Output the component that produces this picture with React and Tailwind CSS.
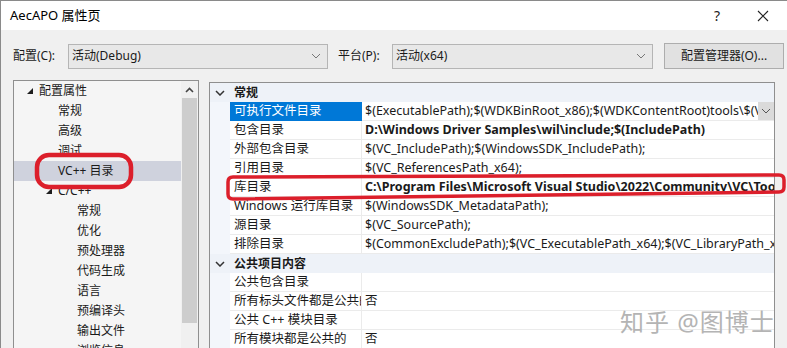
import React from "react";

const FONT = { fontFamily: '"Noto Sans", "Noto Sans CJK SC", sans-serif' };

function Chevron({ className = "", color = "#606060", w = 1.2 }) {
  return (
    <svg width="10" height="6" viewBox="0 0 10 6" className={className}>
      <polyline points="1,1 5,5 9,1" fill="none" stroke={color} strokeWidth={w} />
    </svg>
  );
}

function Tri() {
  return (
    <svg width="6" height="6" viewBox="0 0 6 6" className="shrink-0">
      <polygon points="6,0 6,6 0,6" fill="#1e1e1e" />
    </svg>
  );
}

const treeRows = [
  { t: "配置属性", pad: 27, tri: true },
  { t: "常规", pad: 58 },
  { t: "高级", pad: 58 },
  { t: "调试", pad: 58 },
  { t: "VC++ 目录", pad: 58, sel: true },
  { t: "C/C++", pad: 46, tri: true },
  { t: "常规", pad: 77 },
  { t: "优化", pad: 77 },
  { t: "预处理器", pad: 77 },
  { t: "代码生成", pad: 77 },
  { t: "语言", pad: 77 },
  { t: "预编译头", pad: 77 },
  { t: "输出文件", pad: 77 },
  { t: "浏览信息", pad: 77 },
];

const gridRows = [
  { cat: "常规" },
  { n: "可执行文件目录", v: "$(ExecutablePath);$(WDKBinRoot_x86);$(WDKContentRoot)tools\\$(VC_ExecutablePath_x64)", sel: true },
  { n: "包含目录", v: "D:\\Windows Driver Samples\\wil\\include;$(IncludePath)", b: true },
  { n: "外部包含目录", v: "$(VC_IncludePath);$(WindowsSDK_IncludePath);" },
  { n: "引用目录", v: "$(VC_ReferencesPath_x64);" },
  { n: "库目录", v: "C:\\Program Files\\Microsoft Visual Studio\\2022\\Community\\VC\\Tools", b: true },
  { n: "Windows 运行库目录", v: "$(WindowsSDK_MetadataPath);" },
  { n: "源目录", v: "$(VC_SourcePath);" },
  { n: "排除目录", v: "$(CommonExcludePath);$(VC_ExecutablePath_x64);$(VC_LibraryPath_x64);" },
  { cat: "公共项目内容" },
  { n: "公共包含目录", v: "" },
  { n: "所有标头文件都是公共的", v: "否" },
  { n: "公共 C++ 模块目录", v: "" },
  { n: "所有模块都是公共的", v: "否" },
];

export default function App() {
  return (
    <div
      className="relative w-[787px] h-[348px] overflow-hidden bg-[#f0f0f0] text-[12px] text-[#1a1a1a] border-l border-t border-[#8a8a8a]"
      style={FONT}
    >
      {/* title bar */}
      <div className="h-[29px] bg-white flex items-center pl-[9px] pr-[18px]">
        <span className="text-[13px] text-black">AecAPO 属性页</span>
        <span className="ml-auto text-[14px] text-[#222] mr-[37px]">?</span>
        <svg width="12" height="12" viewBox="0 0 12 12">
          <path d="M1 1 L11 11 M11 1 L1 11" stroke="#222" strokeWidth="1.1" />
        </svg>
      </div>

      {/* config row */}
      <div className="flex items-center mt-[13px] h-[26px] pl-[12px]">
        <span className="w-[55px]">配置(C):</span>
        <div className="w-[260px] h-[25px] bg-[#e8e8e8] border border-[#b5b5b5] flex items-center pl-[3px] pr-[6px]">
          <span>活动(Debug)</span>
          <Chevron className="ml-auto" color="#777" w={1} />
        </div>
        <span className="ml-[10px] w-[54px]">平台(P):</span>
        <div className="w-[261px] h-[25px] bg-[#e8e8e8] border border-[#b5b5b5] flex items-center pl-[3px] pr-[6px]">
          <span>活动(x64)</span>
          <Chevron className="ml-auto" color="#777" w={1} />
        </div>
        <div className="ml-[11px] w-[120px] h-[26px] bg-[#e1e1e1] border border-[#adadad] flex items-center justify-center">
          配置管理器(O)...
        </div>
      </div>

      {/* main */}
      <div className="flex items-start pl-[12px] mt-[11px]">
        {/* tree */}
        <div className="w-[186px] h-[280px] border border-[#8f8f8f] bg-[#f5f5f5] flex">
          <div className="flex-1 flex flex-col">
            {treeRows.map((r, i) => (
              <div
                key={i}
                className={`h-[20px] flex items-center shrink-0 ${r.sel ? "bg-[#cfd2dd]" : ""}`}
                style={{ paddingLeft: r.pad - 14 }}
              >
                {r.tri ? (
                  <>
                    <Tri />
                    <span className="ml-[6px]">{r.t}</span>
                  </>
                ) : (
                  <span>{r.t}</span>
                )}
              </div>
            ))}
          </div>
          <div className="w-[17px] bg-[#f0f0f0] flex flex-col items-center">
            <div className="h-[17px] flex items-center justify-center">
              <svg width="9" height="6" viewBox="0 0 9 6">
                <polyline points="1,5 4.5,1.5 8,5" fill="none" stroke="#444" strokeWidth="1.6" />
              </svg>
            </div>
            <div className="w-[15px] h-[225px] bg-[#cdcdcd]" />
          </div>
        </div>

        {/* grid */}
        <div className="ml-[10px] mt-[2px] w-[566px] h-[280px] border border-[#8f8f8f] bg-white flex flex-col text-[12.5px]">
          {gridRows.map((r, i) =>
            r.cat ? (
              <div key={i} className="h-[19px] flex items-center bg-[#eef2f8] shrink-0">
                <div className="w-[20px] flex justify-center">
                  <Chevron color="#333" w={1.5} />
                </div>
                <span className="pl-[4px] font-bold text-[12px]">{r.cat}</span>
              </div>
            ) : (
              <div key={i} className="h-[19px] flex shrink-0">
                <div className="w-[20px] bg-[#f3f6fb]" />
                <div
                  className={`w-[132px] flex items-center pl-[4px] overflow-hidden whitespace-nowrap border-b border-r ${
                    r.sel ? "bg-[#0078d7] text-white border-[#0078d7]" : "border-[#ebebeb]"
                  }`}
                >
                  {r.n}
                </div>
                <div className="flex-1 min-w-0 flex items-center border-b border-[#ebebeb]">
                  <span
                    className={`pl-[3px] flex-1 overflow-hidden whitespace-nowrap ${r.b ? "font-bold" : ""}`}
                  >
                    {r.v}
                  </span>
                  {r.sel && (
                    <div className="w-[16px] h-[18px] bg-[#dadada] flex items-center justify-center shrink-0">
                      <Chevron color="#555" w={1} />
                    </div>
                  )}
                </div>
              </div>
            )
          )}
        </div>
      </div>

      {/* watermark */}
      <div className="absolute left-[619px] top-[303px] text-[24px] text-[#b4b4b4] tracking-[1px] whitespace-nowrap">
        知乎 @图博士
      </div>

      {/* red annotations */}
      <svg className="absolute left-0 top-0 pointer-events-none" width="787" height="348">
        <rect x="36" y="154" width="94" height="32" rx="12" fill="none" stroke="#dc1f2b" strokeWidth="4.5" />
        <path
          d="M232 176 L778 174 Q783 174 783 179 L783 186 Q783 191 778 191 L232 198 Q227 198 227 193 L227 181 Q227 176 232 176 Z"
          fill="none"
          stroke="#dc1f2b"
          strokeWidth="3.5"
        />
      </svg>
    </div>
  );
}
